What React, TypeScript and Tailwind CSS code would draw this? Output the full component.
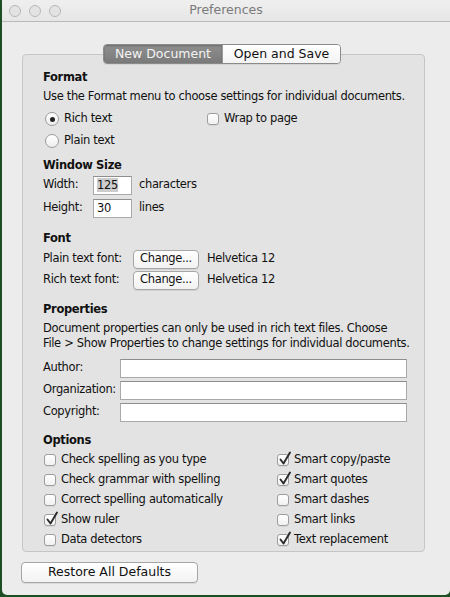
import { ReactNode } from "react";

const font = { fontFamily: '"DejaVu Sans", "Liberation Sans", sans-serif' };

function Check({ on }: { on?: boolean }) {
  return (
    <span className="relative shrink-0 inline-block w-[12px] h-[12px] rounded-[3px] border border-[#9d9d9d] bg-gradient-to-b from-white to-[#f1f1f1] shadow-[0_1px_0_rgba(0,0,0,0.05)]">
      {on && (
        <svg className="absolute left-[0px] top-[-4px]" width="14" height="15" viewBox="0 0 14 15">
          <path d="M2.5 8.5 L5.5 12.5 L12 1.5" fill="none" stroke="#2b2b2b" strokeWidth="1.9" strokeLinecap="round" strokeLinejoin="round" />
        </svg>
      )}
    </span>
  );
}

function Radio({ on }: { on?: boolean }) {
  return (
    <span className="flex shrink-0 items-center justify-center w-[14px] h-[14px] rounded-full border border-[#9a9a9a] bg-gradient-to-b from-white to-[#eeeeee]">
      {on && <span className="w-[5px] h-[5px] rounded-full bg-[#222]" />}
    </span>
  );
}

function Heading({ children, className = "" }: { children: ReactNode; className?: string }) {
  return <div className={`h-[16px] leading-[16px] font-bold ${className}`}>{children}</div>;
}

function Field({ className = "", children }: { className?: string; children?: ReactNode }) {
  return (
    <div className={`h-[19px] shrink-0 bg-white border border-[#a9a9a9] border-t-[#8e8e8e] leading-[17px] px-[3px] ${className}`}>
      {children}
    </div>
  );
}

function PushButton({ children, className = "" }: { children: ReactNode; className?: string }) {
  return (
    <div
      className={`h-[19px] shrink-0 flex items-center justify-center rounded-[4px] border border-[#a6a6a6] bg-gradient-to-b from-white to-[#f2f2f2] shadow-[0_1px_0_rgba(0,0,0,0.08)] ${className}`}
    >
      {children}
    </div>
  );
}

const leftOptions = [
  { label: "Check spelling as you type", on: false },
  { label: "Check grammar with spelling", on: false },
  { label: "Correct spelling automatically", on: false },
  { label: "Show ruler", on: true },
  { label: "Data detectors", on: false },
];

const rightOptions = [
  { label: "Smart copy/paste", on: true },
  { label: "Smart quotes", on: true },
  { label: "Smart dashes", on: false },
  { label: "Smart links", on: false },
  { label: "Text replacement", on: true },
];

export default function App() {
  return (
    <div className="w-[450px] h-[597px] bg-[#1d4f25] overflow-hidden" style={font}>
      <div className="ml-[2px] w-[448px] h-[595px] bg-[#ececec] rounded-b-[5px] text-[11.5px] tracking-[-0.35px] text-[#111] whitespace-nowrap flex flex-col">
        {/* Title bar */}
        <div className="h-[22px] shrink-0 flex items-center border-b border-[#b9b9b9] bg-gradient-to-b from-[#efefef] to-[#e6e6e6] relative tracking-normal">
          <div className="flex gap-[8px] pl-[7px]">
            <span className="w-[12px] h-[12px] rounded-full border border-[#b8b8b8] bg-[#e3e3e3]" />
            <span className="w-[12px] h-[12px] rounded-full border border-[#b8b8b8] bg-[#e3e3e3]" />
            <span className="w-[12px] h-[12px] rounded-full border border-[#b8b8b8] bg-[#e3e3e3]" />
          </div>
          <div className="absolute inset-0 flex items-center justify-center text-[12.5px] text-[#7a7a7a]">Preferences</div>
        </div>

        {/* Tabs */}
        <div className="mt-[22px] shrink-0 relative z-10 flex pl-[101px] tracking-normal">
          <div className="flex h-[20px] rounded-[4px] border border-[#8a8a8a] overflow-hidden shadow-[0_1px_0_rgba(0,0,0,0.06)]">
            <div className="w-[118px] flex items-center justify-center text-[12.5px] text-[#f4f4f4] bg-gradient-to-b from-[#8f8f8f] to-[#7a7a7a] shadow-[inset_0_1px_2px_rgba(0,0,0,0.25)]">
              New Document
            </div>
            <div className="w-[118px] flex items-center justify-center text-[12.5px] text-[#111] bg-gradient-to-b from-white to-[#f3f3f3] border-l border-[#9a9a9a]">
              Open and Save
            </div>
          </div>
        </div>

        {/* Group box */}
        <div className="-mt-[10px] shrink-0 ml-[20px] w-[403px] rounded-[4px] border border-[#c6c6c6] bg-[#e3e3e3] pl-[20px] pt-[14px] pb-[1px]">
          <Heading>Format</Heading>
          <div className="mt-[3px] h-[16px] leading-[16px]">Use the Format menu to choose settings for individual documents.</div>

          <div className="mt-[5px] h-[20px] flex items-center">
            <div className="w-[164px] flex items-center gap-[5px] pl-[2px]">
              <Radio on />
              <span>Rich text</span>
            </div>
            <div className="flex items-center gap-[5px]">
              <Check />
              <span>Wrap to page</span>
            </div>
          </div>
          <div className="mt-[2px] h-[20px] flex items-center gap-[5px] pl-[2px]">
            <Radio />
            <span>Plain text</span>
          </div>

          <Heading className="mt-[6px]">Window Size</Heading>
          <div className="mt-[2px] h-[20px] flex items-center">
            <span className="w-[50px]">Width:</span>
            <Field className="w-[39px]">
              <span className="bg-[#cdcdcd]">125</span>
            </Field>
            <span className="ml-[7px]">characters</span>
          </div>
          <div className="mt-[3px] h-[20px] flex items-center">
            <span className="w-[50px]">Height:</span>
            <Field className="w-[39px]">30</Field>
            <span className="ml-[7px]">lines</span>
          </div>

          <Heading className="mt-[12px]">Font</Heading>
          <div className="mt-[3px] h-[20px] flex items-center">
            <span className="w-[90px]">Plain text font:</span>
            <PushButton className="w-[66px]">Change...</PushButton>
            <span className="ml-[8px]">Helvetica 12</span>
          </div>
          <div className="mt-[1px] h-[20px] flex items-center">
            <span className="w-[90px]">Rich text font:</span>
            <PushButton className="w-[66px]">Change...</PushButton>
            <span className="ml-[8px]">Helvetica 12</span>
          </div>

          <Heading className="mt-[11px]">Properties</Heading>
          <p className="mt-[4px] leading-[15px]">
            Document properties can only be used in rich text files. Choose
            <br />
            File &gt; Show Properties to change settings for individual documents.
          </p>

          <div className="mt-[7px] flex flex-col gap-[2px]">
            {["Author:", "Organization:", "Copyright:"].map((l) => (
              <div key={l} className="h-[20px] flex items-center">
                <span className="w-[77px]">{l}</span>
                <Field className="w-[287px]" />
              </div>
            ))}
          </div>

          <Heading className="mt-[10px]">Options</Heading>
          <div className="mt-[2px] flex">
            <div className="w-[234px] flex flex-col">
              {leftOptions.map((o) => (
                <div key={o.label} className="h-[20px] flex items-center gap-[5px] pl-[1px]">
                  <Check on={o.on} />
                  <span>{o.label}</span>
                </div>
              ))}
            </div>
            <div className="flex flex-col">
              {rightOptions.map((o) => (
                <div key={o.label} className="h-[20px] flex items-center gap-[5px]">
                  <Check on={o.on} />
                  <span>{o.label}</span>
                </div>
              ))}
            </div>
          </div>
        </div>

        {/* Footer button */}
        <div className="mt-[10px] shrink-0 pl-[19px] tracking-normal">
          <PushButton className="w-[177px] h-[21px] text-[12.5px]">Restore All Defaults</PushButton>
        </div>
      </div>
    </div>
  );
}
